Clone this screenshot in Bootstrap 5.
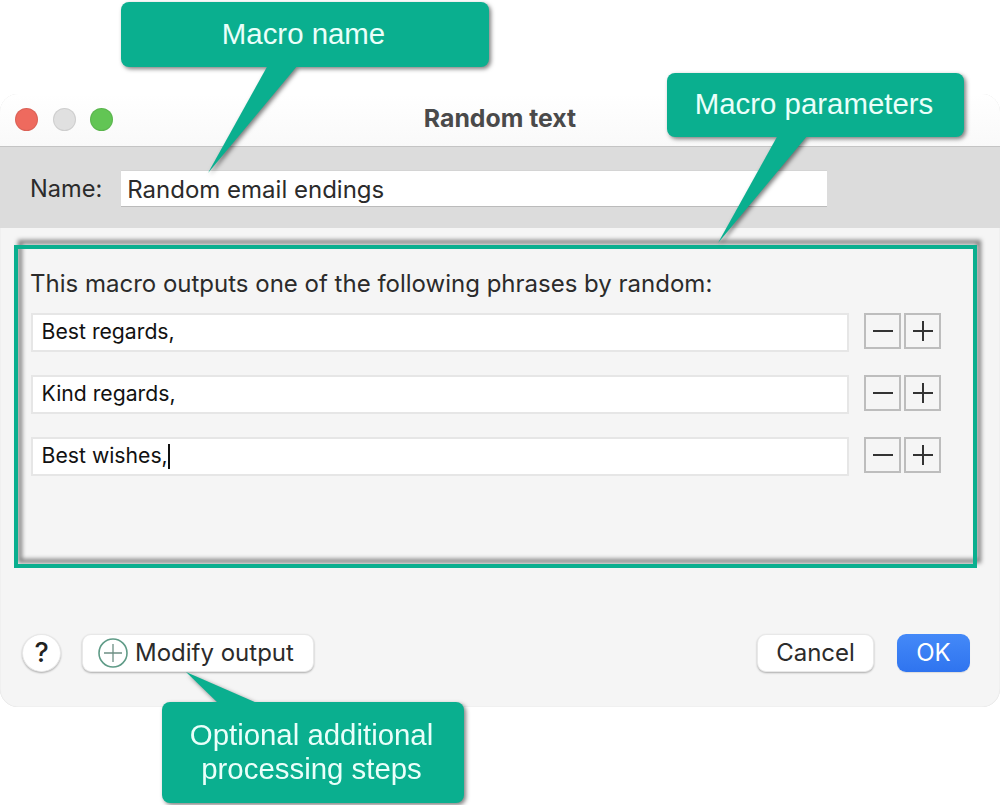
<!DOCTYPE html>
<html lang="en">

<head>
  <meta charset="UTF-8">
  <meta name="viewport" content="width=device-width, initial-scale=1.0">
  <title>Random text</title>
  <link href="https://cdn.jsdelivr.net/npm/bootstrap@5.3.3/dist/css/bootstrap.min.css" rel="stylesheet">
  <style>
    html, body { height: 805px; overflow: hidden; }
    body { background: #fff; font-family: Inter, "Noto Sans", sans-serif; color: #2b2b2b; position: relative; }

    /* dialog window */
    .mac-window { margin-top: 94px; height: 613px; border-radius: 18px; overflow: hidden; background: #f5f5f5; box-shadow: inset 0 0 1px rgba(0,0,0,.2); }
    .mac-title { height: 53px; padding-bottom: 2px; background: linear-gradient(#fff, #f9f9f9); border-bottom: 1px solid #c4c4c4; position: relative; }
    .mac-title h1 { font-size: 24.8px; font-weight: 700; color: #4a4a4a; margin: 0; }
    .light { width: 23px; height: 23px; border-radius: 50%; border: 1px solid rgba(0,0,0,.08); }
    .lights { position: absolute; left: 15px; top: 14px; gap: 14.5px; }
    .light-red { background: #ee6a5e; }
    .light-grey { background: #e0e0e0; }
    .light-green { background: #62c554; }
    .name-bar { height: 81px; background: #dcdcdc; padding: 23px 173px 0 30px; font-size: 23.6px; }
    .name-field { flex: 1; height: 37px; margin-left: 19px; padding: 0 6px; background: #fff; color: #2b2b2b; font-size: 24px; line-height: 38px; border-bottom: 1px solid #bbb; border-top: 1px solid #d4d4d4; }
    .name-bar label { line-height: 38px; }

    /* panel with the teal frame */
    .param-panel { position: relative; margin: 17px 23px 0 14px; height: 323px; padding: 21px 36px 0 17px; }
    .param-panel::before { content: ""; position: absolute; inset: 0; border: 4px solid #0aaf8f; filter: drop-shadow(4px -5px 2px rgba(0,0,0,.5)); pointer-events: none; }
    .param-intro { font-size: 24px; line-height: 36px; margin-bottom: 11px; margin-left: -1px; }
    .phrase-row { height: 39px; margin-bottom: 23px; }
    .phrase-field { flex: 1; height: 39px; padding: 0 8.6px; font-size: 21.2px; line-height: 33px; color: #111; border: 2px solid #e6e6e6; border-radius: 0; font-family: Inter, sans-serif; }
    .caret-mark { display: inline-block; width: 2px; height: 25px; background: #111; vertical-align: -6px; margin-left: 0; }
    .step-btn { width: 37px; height: 36px; padding: 0; background: #f5f5f5; border: 2px solid #bdbdbd; border-radius: 0; }
    .step-btns { margin-left: 15px; gap: 3px; height: 36px; }
    .step-btn svg { display: block; margin: auto; }

    /* bottom buttons */
    .foot-row { margin: 66px 30px 0 22px; height: 38px; }
    .mac-btn { height: 38px; padding: 0; background: #fff; color: #2b2b2b; font-size: 24px; line-height: 36px; border: 1px solid #e8e8e8; border-radius: 9px; box-shadow: 0 1px 2px rgba(0,0,0,.3); font-family: Inter, sans-serif; }
    .help-btn { width: 39px; border-radius: 50%; font-size: 27px; font-weight: 500; color: #222; }
    .modify-btn { width: 232px; margin-left: 21px; padding-left: 15px; gap: 7px; }
    .cancel-btn { width: 117px; margin-right: 23px; }
    .ok-btn { width: 73px; background: linear-gradient(#4489f8, #2f74ef); color: #fff; border: 0; box-shadow: 0 1px 1px rgba(0,0,0,.1); }

    /* green callouts, they lie over the window */
    .callout { position: absolute; filter: drop-shadow(2px 2px 2px rgba(0,0,0,.5)); }
    .callout-box { position: relative; background: #0aaf8f; color: #eafffa; font-family: "Liberation Sans", Arial, sans-serif; font-size: 29.4px; text-align: center; border-radius: 8px; padding-right: 3px; }
    .callout svg { position: absolute; display: block; }
    .call-name { left: 121px; top: 2px; }
    .call-name .callout-box { width: 368px; height: 65px; line-height: 63px; }
    .call-name svg { left: 80px; top: 63px; }
    .call-params { left: 667px; top: 73px; }
    .call-params .callout-box { width: 297px; height: 64px; line-height: 62px; }
    .call-params svg { left: 45px; top: 62px; }
    .call-steps { left: 162px; top: 702px; }
    .call-steps .callout-box { width: 302px; height: 101px; line-height: 34px; padding-top: 16px; }
    .call-steps svg { left: 20px; top: -32px; }
  </style>
</head>

<body>
  <div class="mac-window">
    <div class="mac-title d-flex align-items-center justify-content-center">
      <div class="lights d-flex">
        <span class="light light-red"></span>
        <span class="light light-grey"></span>
        <span class="light light-green"></span>
      </div>
      <h1>Random text</h1>
    </div>

    <div class="name-bar d-flex align-items-start">
      <label>Name:</label>
      <div class="name-field">Random email endings</div>
    </div>

    <div class="param-panel">
      <div class="param-intro">This macro outputs one of the following phrases by random:</div>

      <div class="phrase-row d-flex">
        <div class="form-control phrase-field">Best regards,</div>
        <div class="step-btns d-flex">
          <button class="btn step-btn"><svg width="22" height="22" viewBox="0 0 22 22"><path d="M1 11h20" stroke="#333" stroke-width="2"/></svg></button>
          <button class="btn step-btn"><svg width="22" height="22" viewBox="0 0 22 22"><path d="M1 11h20M11 1v20" stroke="#333" stroke-width="2"/></svg></button>
        </div>
      </div>

      <div class="phrase-row d-flex">
        <div class="form-control phrase-field">Kind regards,</div>
        <div class="step-btns d-flex">
          <button class="btn step-btn"><svg width="22" height="22" viewBox="0 0 22 22"><path d="M1 11h20" stroke="#333" stroke-width="2"/></svg></button>
          <button class="btn step-btn"><svg width="22" height="22" viewBox="0 0 22 22"><path d="M1 11h20M11 1v20" stroke="#333" stroke-width="2"/></svg></button>
        </div>
      </div>

      <div class="phrase-row d-flex">
        <div class="form-control phrase-field">Best wishes,<span class="caret-mark"></span></div>
        <div class="step-btns d-flex">
          <button class="btn step-btn"><svg width="22" height="22" viewBox="0 0 22 22"><path d="M1 11h20" stroke="#333" stroke-width="2"/></svg></button>
          <button class="btn step-btn"><svg width="22" height="22" viewBox="0 0 22 22"><path d="M1 11h20M11 1v20" stroke="#333" stroke-width="2"/></svg></button>
        </div>
      </div>
    </div>

    <div class="foot-row d-flex align-items-center">
      <button class="btn mac-btn help-btn">?</button>
      <button class="btn mac-btn modify-btn d-flex align-items-center">
        <svg width="30" height="30" viewBox="0 0 30 30"><circle cx="15" cy="15" r="14" fill="none" stroke="#5f9b87" stroke-width="1.6"/><path d="M15 6v18M6 15h18" stroke="#6d8f84" stroke-width="1.3"/></svg>
        Modify output
      </button>
      <button class="btn mac-btn cancel-btn ms-auto">Cancel</button>
      <button class="btn mac-btn ok-btn">OK</button>
    </div>
  </div>

  <div class="callout call-name">
    <svg width="100" height="110" viewBox="0 0 100 110"><polygon points="67,0 97,0 7,108" fill="#0aaf8f"/></svg>
    <div class="callout-box">Macro name</div>
  </div>
  <div class="callout call-params">
    <svg width="100" height="110" viewBox="0 0 100 110"><polygon points="66,0 96,0 6,108" fill="#0aaf8f"/></svg>
    <div class="callout-box">Macro parameters</div>
  </div>
  <div class="callout call-steps">
    <svg width="80" height="34" viewBox="0 0 80 34"><polygon points="4,2 36,33 75,33" fill="#0aaf8f"/></svg>
    <div class="callout-box">Optional additional<br>processing steps</div>
  </div>

  <script src="https://cdn.jsdelivr.net/npm/bootstrap@5.3.3/dist/js/bootstrap.bundle.min.js"></script>
</body>

</html>
